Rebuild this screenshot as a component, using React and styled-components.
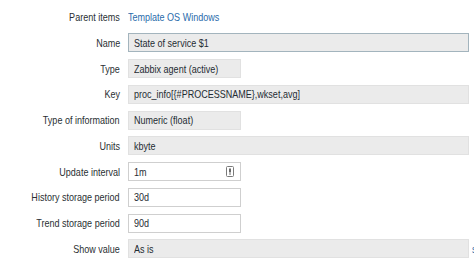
import React from 'react';
import styled, { createGlobalStyle } from 'styled-components';

const GlobalStyle = createGlobalStyle`
  html, body {
    margin: 0;
    padding: 0;
    background: #fff;
    overflow: hidden;
  }
  body {
    font-family: "Liberation Sans", Arial, sans-serif;
    font-size: 11px;
    color: #1f2c33;
  }
`;

const Form = styled.div`
  display: flex;
  flex-direction: column;
  gap: 6.75px;
  padding-top: 7.5px;
  width: 474px;
`;

const Row = styled.div`
  display: grid;
  grid-template-columns: 120px auto;
  column-gap: 8px;
  align-items: center;
  height: 19px;
`;

// the screenshot's type is a squeezed Arial
const Text = styled.span`
  display: inline-block;
  white-space: nowrap;
  transform: scaleX(0.82);
  transform-origin: ${({ right }) => (right ? 'right' : 'left')} center;
`;

const Label = styled.div`
  text-align: right;
  white-space: nowrap;
  color: #2a2f33;
`;

const FieldWrap = styled.div`
  display: flex;
  align-items: center;
  white-space: nowrap;
`;

const Field = styled.div`
  box-sizing: border-box;
  display: flex;
  align-items: center;
  justify-content: space-between;
  height: 19px;
  width: ${({ wide }) => (wide ? '341px' : '113px')};
  padding: 0 5px 0 5px;
  background: ${({ editable }) => (editable ? '#fff' : '#ebebeb')};
  border: 1px solid ${({ focus, editable }) => (focus ? '#a3b4bd' : editable ? '#cfcfcf' : '#e1e1e1')};
  color: #1f2c33;
  white-space: nowrap;
  overflow: hidden;
`;

const Link = styled.a`
  color: #2a6bab;
  text-decoration: none;
  margin-left: ${({ gap }) => gap || 0}px;
`;

const Hint = styled.span`
  display: flex;
  align-items: center;
  margin-right: 1px;
`;

const HintIcon = () => (
  <svg width="8" height="11" viewBox="0 0 8 11">
    <rect x="0.5" y="0.5" width="7" height="10" rx="1" fill="#fff" stroke="#7a7a7a" />
    <rect x="3" y="2.5" width="2" height="4" fill="#6a6a6a" />
    <rect x="3" y="7.5" width="2" height="1" fill="#6a6a6a" />
  </svg>
);

const rows = [
  { label: 'Name', value: 'State of service $1', wide: true, focus: true },
  { label: 'Type', value: 'Zabbix agent (active)' },
  { label: 'Key', value: 'proc_info[{#PROCESSNAME},wkset,avg]', wide: true },
  { label: 'Type of information', value: 'Numeric (float)' },
  { label: 'Units', value: 'kbyte', wide: true },
  { label: 'Update interval', value: '1m', editable: true, hint: true },
  { label: 'History storage period', value: '30d', editable: true },
  { label: 'Trend storage period', value: '90d', editable: true },
  { label: 'Show value', value: 'As is', wide: true, link: 'show' },
];

export default function App() {
  return (
    <>
      <GlobalStyle />
      <Form>
        <Row>
          <Label>
            <Text right>Parent items</Text>
          </Label>
          <FieldWrap>
            <Link href="#">
              <Text>Template OS Windows</Text>
            </Link>
          </FieldWrap>
        </Row>
        {rows.map((r) => (
          <Row key={r.label}>
            <Label>
              <Text right>{r.label}</Text>
            </Label>
            <FieldWrap>
              <Field wide={r.wide} editable={r.editable} focus={r.focus}>
                <Text>{r.value}</Text>
                {r.hint && (
                  <Hint>
                    <HintIcon />
                  </Hint>
                )}
              </Field>
              {r.link && (
                <Link href="#" gap={3}>
                  <Text>{r.link}</Text>
                </Link>
              )}
            </FieldWrap>
          </Row>
        ))}
      </Form>
    </>
  );
}
